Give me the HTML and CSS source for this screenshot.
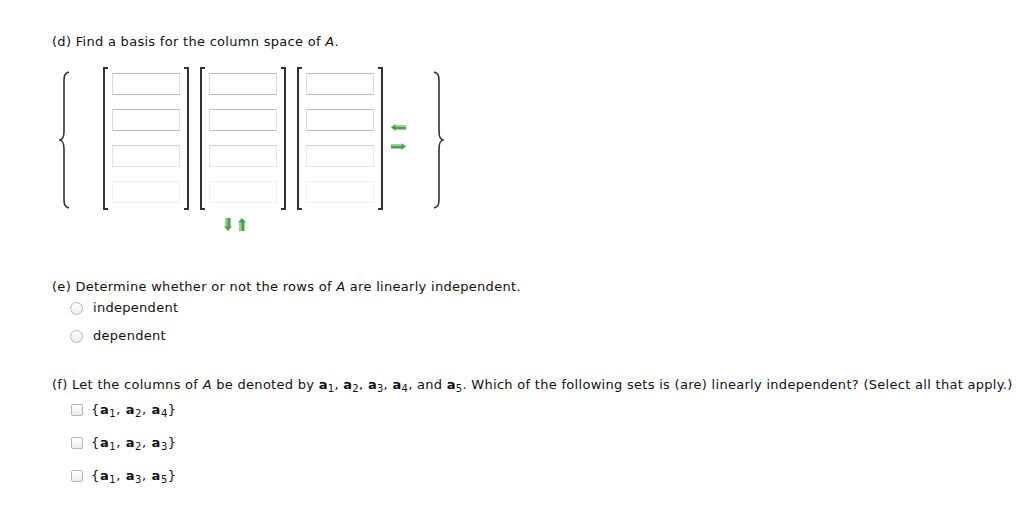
FILE: index.html
```html
<!DOCTYPE html>
<html>
<head>
<meta charset="utf-8">
<link rel="stylesheet" href="styles.css">
</head>
<body>
<div class="page">
  <p class="q q-d">(d) Find a basis for the column space of <i>A</i>.</p>

  <div class="matrix-set">
    <svg class="brace" width="12" height="138" viewBox="0 0 12 138">
      <path d="M10 1 C6 2 5 4 5 10 L5 60 C5 66 4 68 1 69 C4 70 5 72 5 78 L5 128 C5 134 6 136 10 137" fill="none" stroke="#333" stroke-width="1.6"/>
    </svg>
    <div class="vectors">
      <div class="vec">
        <span class="brk brk-l"></span>
        <div class="cells">
          <span class="cell c1"></span><span class="cell c2"></span><span class="cell c3"></span><span class="cell c4"></span>
        </div>
        <span class="brk brk-r"></span>
      </div>
      <div class="vec">
        <span class="brk brk-l"></span>
        <div class="cells">
          <span class="cell c1"></span><span class="cell c2"></span><span class="cell c3"></span><span class="cell c4"></span>
        </div>
        <span class="brk brk-r"></span>
      </div>
      <div class="vec">
        <span class="brk brk-l"></span>
        <div class="cells">
          <span class="cell c1"></span><span class="cell c2"></span><span class="cell c3"></span><span class="cell c4"></span>
        </div>
        <span class="brk brk-r"></span>
      </div>
    </div>
    <div class="h-arrows">
      <svg width="15" height="7" viewBox="0 0 15 7"><path d="M0 3.5 L4.5 0 L4.5 1.5 L15 1.5 L15 5.5 L4.5 5.5 L4.5 7 Z" fill="#4f9f4f"/><path d="M4.5 1.5 L15 1.5 L15 3 L4.5 3Z" fill="#92d392"/></svg>
      <svg width="15" height="7" viewBox="0 0 15 7"><path d="M15 3.5 L10.5 0 L10.5 1.5 L0 1.5 L0 5.5 L10.5 5.5 L10.5 7 Z" fill="#4f9f4f"/><path d="M0 1.5 L10.5 1.5 L10.5 3 L0 3Z" fill="#92d392"/></svg>
    </div>
    <svg class="brace brace-r" width="12" height="138" viewBox="0 0 12 138">
      <path d="M2 1 C6 2 7 4 7 10 L7 60 C7 66 8 68 11 69 C8 70 7 72 7 78 L7 128 C7 134 6 136 2 137" fill="none" stroke="#333" stroke-width="1.6"/>
    </svg>
  </div>

  <div class="v-arrows">
    <svg width="8" height="13" viewBox="0 0 8 13"><path d="M4 13 L0 8.5 L1.5 8.5 L1.5 0 L6.5 0 L6.5 8.5 L8 8.5 Z" fill="#4f9f4f"/><path d="M1.5 0 L3.5 0 L3.5 8.5 L1.5 8.5Z" fill="#92d392"/></svg>
    <svg width="8" height="13" viewBox="0 0 8 13"><path d="M4 0 L0 4.5 L1.5 4.5 L1.5 13 L6.5 13 L6.5 4.5 L8 4.5 Z" fill="#4f9f4f"/><path d="M1.5 4.5 L3.5 4.5 L3.5 13 L1.5 13Z" fill="#92d392"/></svg>
  </div>

  <p class="q q-e">(e) Determine whether or not the rows of <i>A</i> are linearly independent.</p>
  <div class="opts radio-opts">
    <label class="opt"><span class="radio"></span><span class="txt">independent</span></label>
    <label class="opt"><span class="radio"></span><span class="txt">dependent</span></label>
  </div>

  <p class="q q-f">(f) Let the columns of <i>A</i> be denoted by <b>a</b><sub>1</sub>, <b>a</b><sub>2</sub>, <b>a</b><sub>3</sub>, <b>a</b><sub>4</sub>, and <b>a</b><sub>5</sub>. Which of the following sets is (are) linearly independent? (Select all that apply.)</p>
  <div class="opts check-opts">
    <label class="opt"><span class="check"></span><span class="txt">{<b>a</b><sub>1</sub>, <b>a</b><sub>2</sub>, <b>a</b><sub>4</sub>}</span></label>
    <label class="opt"><span class="check"></span><span class="txt">{<b>a</b><sub>1</sub>, <b>a</b><sub>2</sub>, <b>a</b><sub>3</sub>}</span></label>
    <label class="opt"><span class="check"></span><span class="txt">{<b>a</b><sub>1</sub>, <b>a</b><sub>3</sub>, <b>a</b><sub>5</sub>}</span></label>
  </div>
</div>
</body>
</html>
```

FILE: styles.css
```css
html, body {
  margin: 0;
  padding: 0;
  background: #fff;
}
body {
  font-family: "DejaVu Sans", Verdana, sans-serif;
  font-size: 13px;
  letter-spacing: 0.29px;
  color: #111;
}
.page {
  padding: 34px 0 0 52px;
}
.q {
  margin: 0;
  line-height: 16px;
  white-space: nowrap;
}
sub {
  font-size: 10px;
  line-height: 0;
  vertical-align: -3px;
  font-weight: normal;
}
.matrix-set {
  display: flex;
  align-items: center;
  margin-top: 17px;
  margin-left: 7px;
  height: 143px;
}
.vectors {
  display: flex;
  gap: 11px;
  margin-left: 32px;
}
.vec {
  display: flex;
  align-items: stretch;
}
.brk {
  width: 3px;
  border: 2px solid #333;
  height: 139px;
}
.brk-l { border-right: none; }
.brk-r { border-left: none; }
.cells {
  display: flex;
  flex-direction: column;
  gap: 14px;
  padding: 6px 4px 0;
}
.cell {
  display: block;
  width: 66px;
  height: 20px;
  border: 1px solid #dcdcdc;
  border-top-color: #bdbdbd;
  border-bottom-color: #bdbdbd;
}
.cell.c3 {
  border-color: #e6e6e6;
  border-top-color: #d0d0d0;
}
.cell.c4 {
  border-color: #f0f0f0;
}
.h-arrows {
  display: flex;
  flex-direction: column;
  gap: 12px;
  margin-left: 8px;
  margin-bottom: 3px;
}
.h-arrows svg { display: block; }
.brace { display: block; margin-top: 2px; }
.brace-r { margin-left: 26px; }
.v-arrows {
  display: flex;
  gap: 6px;
  margin: 8px 0 0 172px;
  height: 13px;
}
.v-arrows svg { display: block; }
.q-e { margin-top: 48px; }
.opts {
  display: flex;
  flex-direction: column;
}
.opt {
  display: flex;
  align-items: center;
  line-height: 16px;
  white-space: nowrap;
}
.radio-opts {
  margin-top: 5px;
  gap: 12px;
  padding-left: 18px;
}
.radio {
  flex: none;
  width: 11px;
  height: 11px;
  border: 1px solid #b5b5b5;
  border-radius: 50%;
  background: linear-gradient(#fff, #ececec);
  margin-right: 10px;
}
.q-f { margin-top: 33px; }
.check-opts {
  margin-top: 9px;
  gap: 17px;
  padding-left: 19px;
}
.check {
  flex: none;
  width: 10px;
  height: 10px;
  border: 1px solid #b5b5b5;
  border-radius: 2px;
  background: linear-gradient(#fff, #ececec);
  margin-right: 8px;
}
.check-opts .txt { letter-spacing: 0.6px; }
```
